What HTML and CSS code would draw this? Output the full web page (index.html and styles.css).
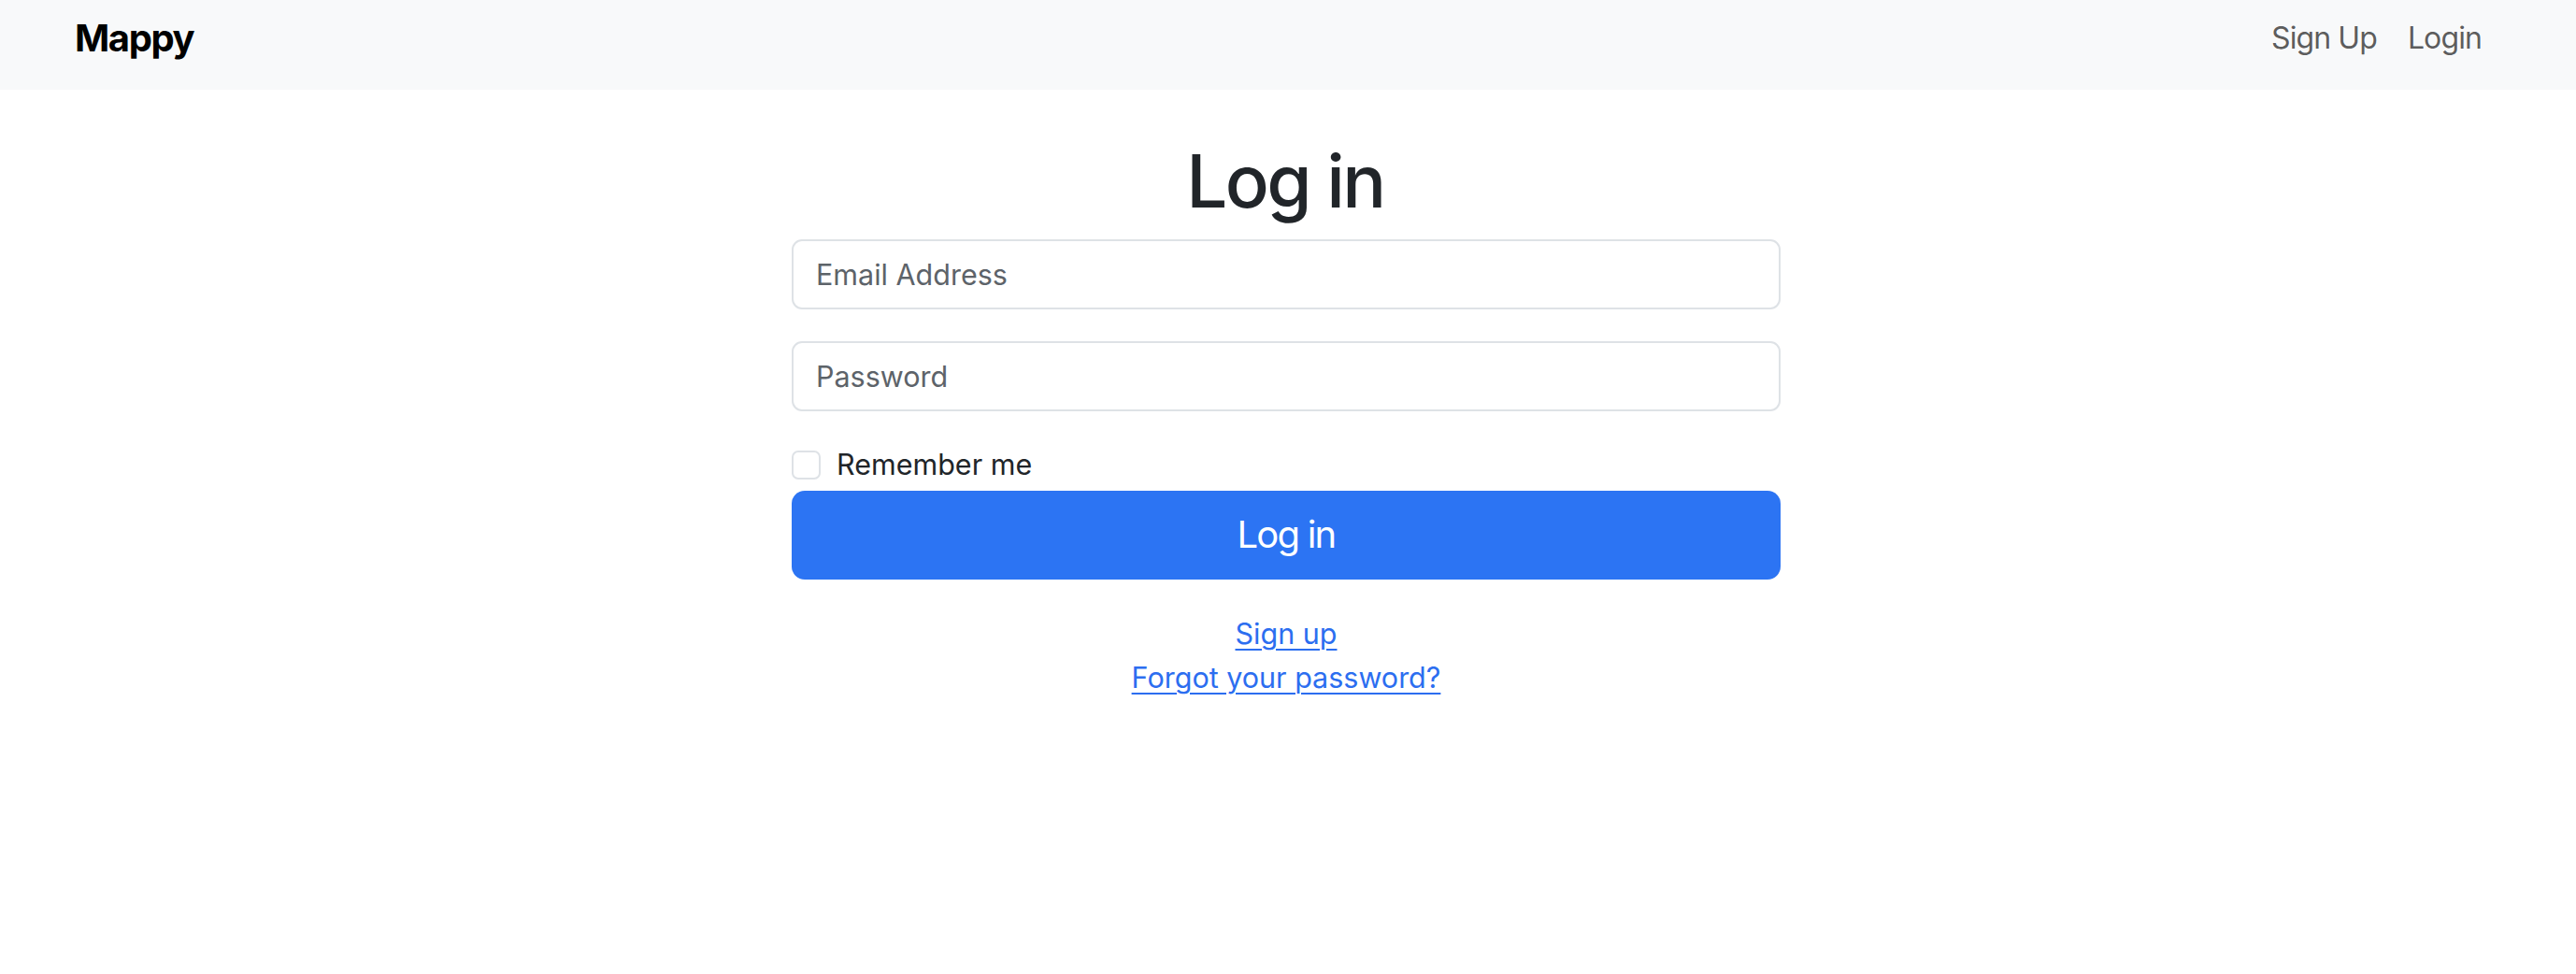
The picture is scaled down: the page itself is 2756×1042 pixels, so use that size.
FILE: index.html
```html
<!DOCTYPE html>
<html lang="en">
<head>
<meta charset="utf-8">
<title>Mappy - Log in</title>
<link rel="stylesheet" href="styles.css">
</head>
<body>
<nav class="navbar">
  <a class="brand" href="#">Mappy</a>
  <div class="nav-links">
    <a class="nav-link" href="#">Sign Up</a>
    <a class="nav-link" href="#">Login</a>
  </div>
</nav>
<main class="page">
  <form class="login">
    <h1 class="title">Log in</h1>
    <input class="field" type="email" placeholder="Email Address">
    <input class="field field-gap" type="password" placeholder="Password">
    <label class="remember">
      <span class="checkbox"></span>
      <span>Remember me</span>
    </label>
    <button class="submit" type="button">Log in</button>
    <div class="links">
      <a href="#">Sign up</a>
      <a href="#">Forgot your password?</a>
    </div>
  </form>
</main>
</body>
</html>
```
FILE: styles.css
```css
* { box-sizing: border-box; }
html, body { margin: 0; padding: 0; background: #fff; }
body {
  font-family: Inter, "Noto Sans", "Liberation Sans", sans-serif;
  font-size: 30.5px;
  line-height: 1.55;
  color: #212529;
}
.navbar {
  height: 96px;
  background: #f8f9fa;
  display: flex;
  align-items: flex-start;
  justify-content: space-between;
  padding: 21px 101px 0 80px;
}
.brand {
  font-size: 40px;
  font-weight: 700;
  color: #000;
  text-decoration: none;
  letter-spacing: -1.4px;
  line-height: 40px;
}
.nav-links {
  display: flex;
  gap: 33px;
  padding-top: 4px;
}
.nav-link {
  color: rgba(0,0,0,0.65);
  text-decoration: none;
  font-size: 32px;
  letter-spacing: -0.9px;
  line-height: 32px;
}
.page {
  display: flex;
  justify-content: center;
  padding-right: 4px;
}
.login {
  width: 1058px;
  display: flex;
  flex-direction: column;
  padding-top: 51px;
}
.title {
  margin: 0 0 15px;
  padding-right: 2px;
  font-size: 78px;
  font-weight: 500;
  line-height: 1.2;
  letter-spacing: -2.6px;
  text-align: center;
  color: #212529;
}
.field {
  display: block;
  width: 100%;
  height: 75px;
  padding: 0 24px;
  border: 2px solid #dee2e6;
  border-radius: 11px;
  font: inherit;
  color: #212529;
  background: #fff;
  outline: none;
}
.field::placeholder { color: #5d6369; opacity: 1; }
.field-gap { margin-top: 34px; }
.remember {
  display: flex;
  align-items: center;
  gap: 17px;
  margin-top: 34px;
  height: 47px;
}
.checkbox {
  width: 31px;
  height: 31px;
  border: 2px solid #dee2e6;
  border-radius: 7px;
  background: #fff;
}
.submit {
  margin-top: 4px;
  height: 95px;
  width: 100%;
  border: none;
  border-radius: 14px;
  background: #2c74f3;
  color: #fff;
  font: inherit;
  font-size: 40px;
  letter-spacing: -1.8px;
  line-height: 1.2;
  cursor: pointer;
}
.links {
  margin-top: 34px;
  display: flex;
  flex-direction: column;
  align-items: center;
  line-height: 47px;
}
.links a {
  color: #2c6ef0;
  text-decoration: underline;
  text-decoration-thickness: 2px;
  text-underline-offset: 5px;
}
```
